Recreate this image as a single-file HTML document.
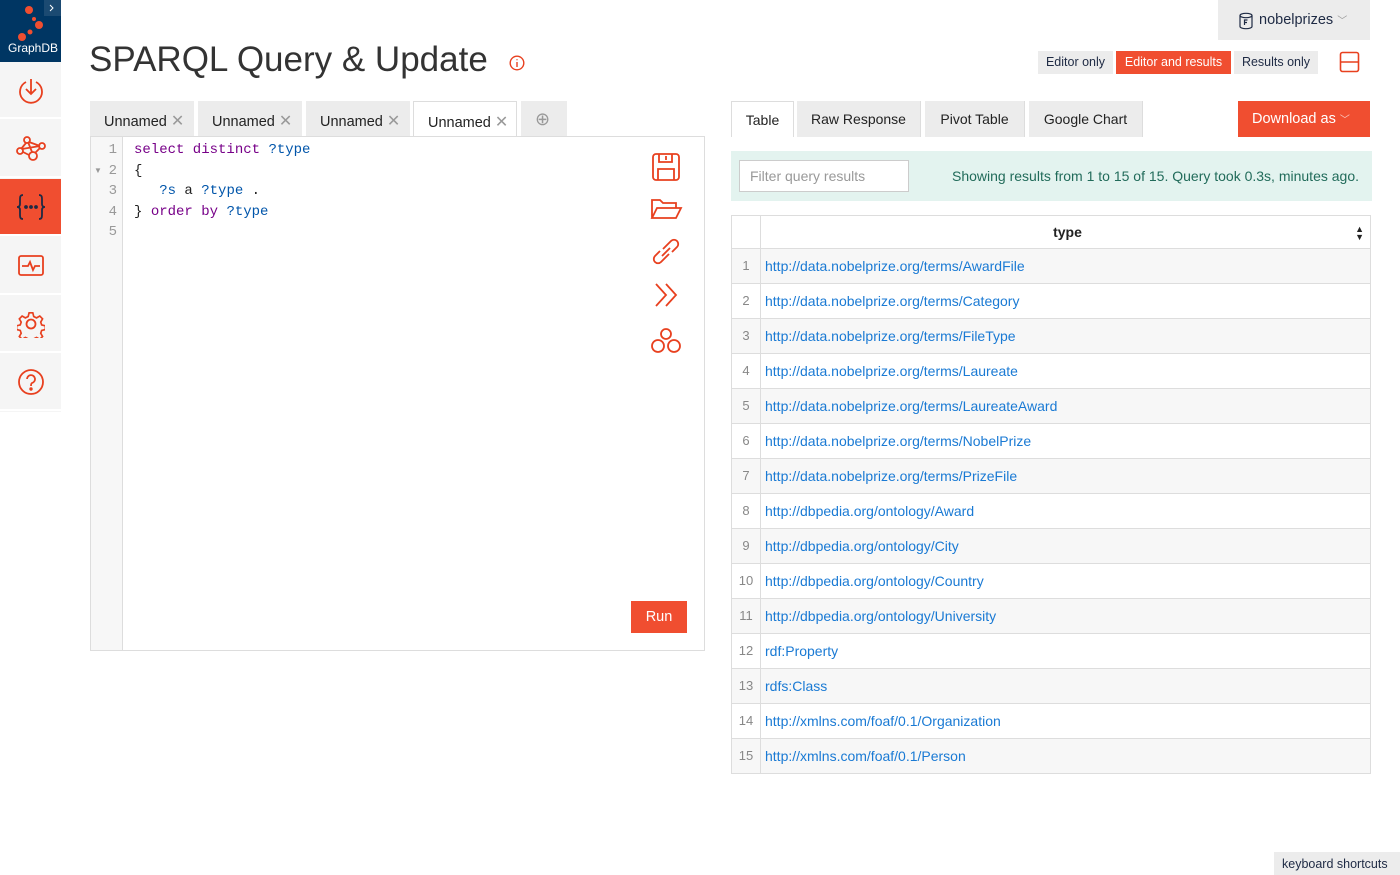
<!DOCTYPE html>
<html><head><meta charset="utf-8"><style>
*{box-sizing:border-box;margin:0;padding:0}
body{width:1400px;height:875px;background:#fff;font-family:"Liberation Sans",sans-serif;color:#222;position:relative;overflow:hidden;font-size:14px}
.abs{position:absolute}
.side{left:0;top:0;width:61px;height:412px;background:#f5f5f5}
.logo{left:0;top:0;width:61px;height:62px;background:#003663}
.sb{left:0;width:61px;height:57px;display:flex;align-items:center;justify-content:center;border-bottom:2px solid #fff}
.tab{top:101px;height:36px;background:#ececec;font-size:14.5px;padding:10px 0 0 14px;color:#222}
.rtab{top:101px;height:36px;background:#ececec;font-size:14px;text-align:center;padding-top:10px;border-right:1px solid #ddd}
.code{font-family:"Liberation Mono",monospace;font-size:14px;line-height:20.5px}
.kw{color:#708}.var{color:#05a}
.btn{font-size:12.5px;top:51px;height:23px;padding-top:4px;text-align:center;background:#ececec;color:#1e2a44}
table{border-collapse:collapse;width:640px;font-size:14px}
td{height:35px;border:1px solid #ddd;padding:0 0 0 4px;line-height:16px}
td.n{width:29px;text-align:center;color:#888;padding:0;font-size:13px}
td a{color:#1a7ad4;text-decoration:none}
tr:nth-child(even) td{background:#f7f7f7}
</style></head><body>
<div class="abs side"></div>
<div class="abs logo">
<svg width="61" height="62" class="abs" style="left:0;top:0"><rect x="44" y="0" width="17" height="16" fill="#1b4a72"/><path d="M50 5l3 3-3 3" stroke="#fff" fill="none" stroke-width="1"/>
<circle cx="29" cy="10" r="4" fill="#f04e30"/><circle cx="34" cy="19" r="2" fill="#f04e30"/><circle cx="39" cy="25" r="4" fill="#f04e30"/><circle cx="30" cy="32" r="2.5" fill="#f04e30"/><circle cx="22" cy="37" r="4" fill="#f04e30"/></svg>
<div class="abs" style="left:8px;top:41px;color:#fff;font-size:12px">GraphDB</div></div>
<div class="abs sb" style="top:62px"><svg width="28" height="28" viewBox="0 0 28 28" fill="none" stroke="#e8401f" stroke-width="1.8"><path d="M9 6a11 11 0 1 0 10 0"/><path d="M14 3v15M9 13l5 5 5-5"/></svg></div>
<div class="abs sb" style="top:121px"><svg width="30" height="30" viewBox="0 0 30 30" fill="none" stroke="#e8401f" stroke-width="1.8"><circle cx="11" cy="6" r="3"/><circle cx="4" cy="17" r="3"/><circle cx="26" cy="12" r="3"/><circle cx="17" cy="22" r="4"/><path d="M13 8l11 4M10 9l-5 6M12 8l4 10M7 18l6 3M24 14l-5 5M6 15l18-3"/></svg></div>
<div class="abs sb" style="top:179px;background:#f04e30"><svg width="30" height="28" viewBox="0 0 30 28" fill="none" stroke="#1e2a44" stroke-width="1.8"><path d="M7 2c-3 0-3 2-3 5v4c0 2-1 3-3 3 2 0 3 1 3 3v4c0 3 0 5 3 5M23 2c3 0 3 2 3 5v4c0 2 1 3 3 3-2 0-3 1-3 3v4c0 3 0 5-3 5"/><circle cx="10" cy="14" r="1" fill="#1e2a44"/><circle cx="15" cy="14" r="1" fill="#1e2a44"/><circle cx="20" cy="14" r="1" fill="#1e2a44"/></svg></div>
<div class="abs sb" style="top:238px"><svg width="28" height="24" viewBox="0 0 28 24" fill="none" stroke="#e8401f" stroke-width="1.8"><rect x="2" y="2" width="24" height="19" rx="2"/><path d="M5 12h6l2-4 3 8 2-4h5"/></svg></div>
<div class="abs sb" style="top:296px"><svg width="28" height="28" viewBox="0 0 28 28" fill="none" stroke="#e8401f" stroke-width="1.8"><circle cx="14" cy="14" r="4.5"/><path d="M12 2h4l1 4 3 1.5 3.5-2 3 3-2 3.5 1 3 4 1v4l-4 1-1 3 2 3.5-3 3-3.5-2-3 1.5-1 4h-4l-1-4-3-1.5-3.5 2-3-3 2-3.5-1-3-4-1v-4l4-1 1-3-2-3.5 3-3 3.5 2 3-1.5z" transform="scale(.93) translate(1 1)"/></svg></div>
<div class="abs sb" style="top:354px"><svg width="28" height="28" viewBox="0 0 28 28" fill="none" stroke="#e8401f" stroke-width="1.8"><circle cx="14" cy="14" r="12"/><path d="M10 11a4 4 0 1 1 5 4c-1 .5-1 1.5-1 3"/><circle cx="14" cy="21" r=".8" fill="#e8401f"/></svg></div>

<div class="abs" style="left:89px;top:40px;font-size:35px;color:#333">SPARQL Query &amp; Update</div>
<svg class="abs" style="left:509px;top:55px" width="16" height="16" viewBox="0 0 16 16" fill="none" stroke="#e8401f" stroke-width="1.4"><circle cx="8" cy="8" r="6.8"/><path d="M8 7v5M8 4.2v1"/></svg>

<div class="abs" style="left:1218px;top:0;width:152px;height:40px;background:#ececec"></div>
<svg class="abs" style="left:1238px;top:12px" width="16" height="18" viewBox="0 0 16 18" fill="none" stroke="#1e2a44" stroke-width="1.2"><ellipse cx="8" cy="3.5" rx="6" ry="2.2"/><path d="M2 3.5v11c0 1.2 2.7 2.2 6 2.2s6-1 6-2.2v-11M6.5 13V8h3M6.5 10.5h2.5"/></svg>
<div class="abs" style="left:1259px;top:12px;font-size:14.5px;color:#1e2a44">nobelprizes <span style="color:#999;font-size:10px">﹀</span></div>
<div class="abs btn" style="left:1038px;width:75px">Editor only</div>
<div class="abs btn" style="left:1116px;width:115px;background:#f04e30;color:#fff">Editor and results</div>
<div class="abs btn" style="left:1234px;width:84px">Results only</div>
<svg class="abs" style="left:1339px;top:51px" width="22" height="22" fill="none" stroke="#e8401f" stroke-width="1.6"><rect x="1.5" y="1.5" width="18" height="19" rx="2"/><path d="M1.5 11h18"/></svg>

<div class="abs tab" style="left:90px;width:104px">Unnamed <span style="color:#999;font-size:16px">✕</span></div>
<div class="abs tab" style="left:198px;width:104px">Unnamed <span style="color:#999;font-size:16px">✕</span></div>
<div class="abs tab" style="left:306px;width:104px">Unnamed <span style="color:#999;font-size:16px">✕</span></div>
<div class="abs tab" style="left:413px;width:104px;background:#fff;border:1px solid #ddd;border-bottom:none">Unnamed <span style="color:#999;font-size:16px">✕</span></div>
<div class="abs tab" style="left:521px;width:46px;padding:8px 0 0 14px;color:#999;font-size:18px">⊕</div>

<div class="abs" style="left:90px;top:136px;width:615px;height:515px;border:1px solid #ddd"></div>
<div class="abs" style="left:91px;top:137px;width:32px;height:513px;background:#f7f7f7;border-right:1px solid #ddd"></div>
<div class="abs code" style="left:91px;top:140px;width:26px;text-align:right;color:#999">1<br>2<br>3<br>4<br>5</div>
<div class="abs" style="left:94px;top:166px;font-size:8px;color:#999">▼</div>
<div class="abs code" style="left:134px;top:140px;white-space:pre"><span class="kw">select distinct</span> <span class="var">?type</span>
{
   <span class="var">?s</span> a <span class="var">?type</span> .
} <span class="kw">order by</span> <span class="var">?type</span></div>
<svg class="abs" style="left:648px;top:150px" width="36" height="210" viewBox="0 0 36 210" fill="none" stroke="#e8401f" stroke-width="1.8">
<rect x="5" y="4" width="26" height="26" rx="3"/><path d="M11 4v8h13V4M18 6v4M10 30V19h16v11"/>
<path d="M4 68V50h8l3 3h13v5M4 68l5-10h24l-5 10z"/>
<path d="M15 99l8-8a4 4 0 0 1 6 6l-5 5M21 104l-8 8a4 4 0 0 1-6-6l5-5M14 106l8-8"/>
<path d="M8 134l10 11-10 11M18 134l10 11-10 11"/>
<circle cx="18" cy="184" r="5"/><circle cx="10" cy="196" r="6"/><circle cx="26" cy="196" r="6"/></svg>
<div class="abs" style="left:631px;top:601px;width:56px;height:32px;background:#f04e30;color:#fff;font-size:14.5px;text-align:center;padding-top:8px">Run</div>

<div class="abs rtab" style="left:731px;width:63px;background:#fff;border:1px solid #ddd;border-bottom:none">Table</div>
<div class="abs rtab" style="left:797px;width:124px">Raw Response</div>
<div class="abs rtab" style="left:925px;width:100px">Pivot Table</div>
<div class="abs rtab" style="left:1029px;width:114px">Google Chart</div>
<div class="abs" style="left:1238px;top:101px;width:132px;height:36px;background:#f04e30;color:#fff;font-size:14.5px;padding:10px 0 0 14px">Download as <span style="font-size:10px;opacity:.7">﹀</span></div>

<div class="abs" style="left:731px;top:151px;width:641px;height:50px;background:#e3f3ef"></div>
<div class="abs" style="left:739px;top:160px;width:170px;height:32px;background:#fff;border:1px solid #ccc;color:#999;font-size:14px;padding:7px 0 0 10px">Filter query results</div>
<div class="abs" style="left:952px;top:168px;color:#216b5a;font-size:14px">Showing results from 1 to 15 of 15. Query took 0.3s, minutes ago.</div>

<div class="abs" style="left:731px;top:215px;width:641px">
<table style="table-layout:fixed">
<tr><td class="n" style="height:33px;background:#fff"></td><td style="height:33px;text-align:center;font-weight:bold;position:relative;background:#fff">type<span style="position:absolute;right:6px;top:9px;font-size:9px;line-height:8px">▲<br>▼</span></td></tr>
<tr><td class="n">1</td><td><a>http://data.nobelprize.org/terms/AwardFile</a></td></tr>
<tr><td class="n">2</td><td><a>http://data.nobelprize.org/terms/Category</a></td></tr>
<tr><td class="n">3</td><td><a>http://data.nobelprize.org/terms/FileType</a></td></tr>
<tr><td class="n">4</td><td><a>http://data.nobelprize.org/terms/Laureate</a></td></tr>
<tr><td class="n">5</td><td><a>http://data.nobelprize.org/terms/LaureateAward</a></td></tr>
<tr><td class="n">6</td><td><a>http://data.nobelprize.org/terms/NobelPrize</a></td></tr>
<tr><td class="n">7</td><td><a>http://data.nobelprize.org/terms/PrizeFile</a></td></tr>
<tr><td class="n">8</td><td><a>http://dbpedia.org/ontology/Award</a></td></tr>
<tr><td class="n">9</td><td><a>http://dbpedia.org/ontology/City</a></td></tr>
<tr><td class="n">10</td><td><a>http://dbpedia.org/ontology/Country</a></td></tr>
<tr><td class="n">11</td><td><a>http://dbpedia.org/ontology/University</a></td></tr>
<tr><td class="n">12</td><td><a>rdf:Property</a></td></tr>
<tr><td class="n">13</td><td><a>rdfs:Class</a></td></tr>
<tr><td class="n">14</td><td><a>http://xmlns.com/foaf/0.1/Organization</a></td></tr>
<tr><td class="n">15</td><td><a>http://xmlns.com/foaf/0.1/Person</a></td></tr>
</table></div>
<div class="abs" style="left:1274px;top:852px;width:126px;height:23px;background:#ececec;font-size:12.5px;padding:5px 0 0 8px;color:#1e2a44">keyboard shortcuts</div>
</body></html>
